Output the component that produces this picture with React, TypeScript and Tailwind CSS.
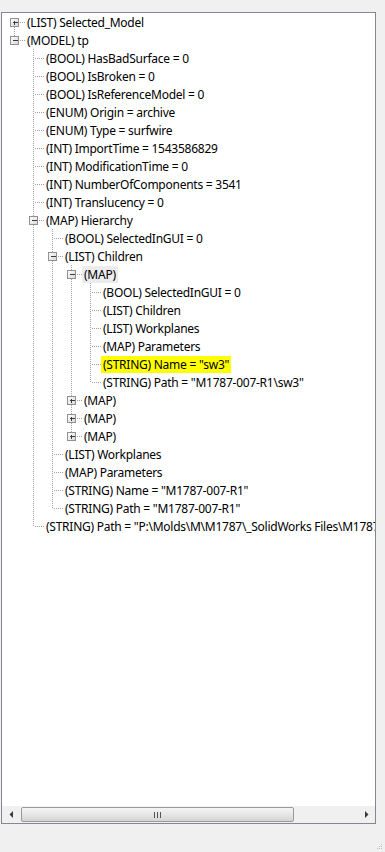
import React from "react";

type TNode = {
  label: string;
  children?: TNode[];
  expanded?: boolean;
  highlight?: boolean;
  gray?: boolean;
};

const leaf = (label: string, extra: Partial<TNode> = {}): TNode => ({ label, ...extra });

const tree: TNode[] = [
  { label: "(LIST) Selected_Model", children: [leaf("x")], expanded: false },
  {
    label: "(MODEL) tp",
    expanded: true,
    children: [
      leaf("(BOOL) HasBadSurface = 0"),
      leaf("(BOOL) IsBroken = 0"),
      leaf("(BOOL) IsReferenceModel = 0"),
      leaf("(ENUM) Origin = archive"),
      leaf("(ENUM) Type = surfwire"),
      leaf("(INT) ImportTime = 1543586829"),
      leaf("(INT) ModificationTime = 0"),
      leaf("(INT) NumberOfComponents = 3541"),
      leaf("(INT) Translucency = 0"),
      {
        label: "(MAP) Hierarchy",
        expanded: true,
        children: [
          leaf("(BOOL) SelectedInGUI = 0"),
          {
            label: "(LIST) Children",
            expanded: true,
            children: [
              {
                label: "(MAP)",
                expanded: true,
                gray: true,
                children: [
                  leaf("(BOOL) SelectedInGUI = 0"),
                  leaf("(LIST) Children"),
                  leaf("(LIST) Workplanes"),
                  leaf("(MAP) Parameters"),
                  leaf('(STRING) Name = "sw3"', { highlight: true }),
                  leaf('(STRING) Path = "M1787-007-R1\\sw3"'),
                ],
              },
              { label: "(MAP)", children: [leaf("x")], expanded: false },
              { label: "(MAP)", children: [leaf("x")], expanded: false },
              { label: "(MAP)", children: [leaf("x")], expanded: false },
            ],
          },
          leaf("(LIST) Workplanes"),
          leaf("(MAP) Parameters"),
          leaf('(STRING) Name = "M1787-007-R1"'),
          leaf('(STRING) Path = "M1787-007-R1"'),
        ],
      },
      leaf('(STRING) Path = "P:\\Molds\\M\\M1787\\_SolidWorks Files\\M1787-007-R1\\M1787-007-R1.SLDASM"'),
    ],
  },
];

type Row = {
  node: TNode;
  level: number;
  isFirstRoot: boolean;
  isLast: boolean;
  continues: boolean[];
};

function flatten(nodes: TNode[], level: number, continues: boolean[], out: Row[]) {
  nodes.forEach((n, i) => {
    const isLast = i === nodes.length - 1;
    out.push({ node: n, level, isFirstRoot: level === 0 && i === 0, isLast, continues });
    if (n.children && n.expanded) {
      flatten(n.children, level + 1, [...continues, !isLast], out);
    }
  });
  return out;
}

const rows = flatten(tree, 0, [], []);

const LINE = "#a0a0a0";

function RowLines({ row }: { row: Row }) {
  const { level, node, isLast, isFirstRoot, continues } = row;
  const w = 23 + 19 * level;
  const cx = 12 + 19 * level + 0.5;
  const has = !!node.children;
  const dash = "1 1";
  return (
    <svg width={w} height={18} className="shrink-0 block" shapeRendering="crispEdges">
      <defs>
        <linearGradient id="bx" x1="0" y1="0" x2="1" y2="1">
          <stop offset="0" stopColor="#ffffff" />
          <stop offset="1" stopColor="#d8d8d8" />
        </linearGradient>
      </defs>
      {continues.map((c, k) =>
        c ? (
          <line key={k} x1={12 + 19 * k + 0.5} y1={0} x2={12 + 19 * k + 0.5} y2={18} stroke={LINE} strokeDasharray={dash} />
        ) : null
      )}
      {!isFirstRoot && (
        <line x1={cx} y1={0} x2={cx} y2={has ? 5 : 9} stroke={LINE} strokeDasharray={dash} />
      )}
      {!isLast && (
        <line x1={cx} y1={has ? 14 : 10} x2={cx} y2={18} stroke={LINE} strokeDasharray={dash} />
      )}
      <line x1={has ? cx + 5.5 : cx + 1.5} y1={9.5} x2={cx + 10.5} y2={9.5} stroke={LINE} strokeDasharray={dash} />
      {has && (
        <g>
          <rect x={cx - 4} y={5.5} width={8} height={8} fill="url(#bx)" stroke="#919191" />
          <line x1={cx - 2} y1={9.5} x2={cx + 3} y2={9.5} stroke="#3a3a3a" />
          {!node.expanded && <line x1={cx} y1={7.5} x2={cx} y2={12} stroke="#3a3a3a" />}
        </g>
      )}
    </svg>
  );
}

function Arrow({ dir }: { dir: "left" | "right" }) {
  return (
    <svg width={4} height={7} className="block">
      {dir === "left" ? (
        <polygon points="4,0 4,7 0.5,3.5" fill="#3a3a3a" />
      ) : (
        <polygon points="0,0 0,7 3.5,3.5" fill="#3a3a3a" />
      )}
    </svg>
  );
}

export default function App() {
  return (
    <div
      className="w-[385px] h-[852px] bg-[#f0f0f0] pt-[12px] pl-[1px] relative overflow-hidden"
      style={{ fontFamily: '"Noto Sans", "Open Sans", sans-serif' }}
    >
      <div className="w-[375px] h-[812px] border border-[#828790] bg-white flex flex-col">
        <div className="flex-1 overflow-hidden">
          {rows.map((r, i) => (
            <div key={i} className="h-[18px] flex items-center whitespace-nowrap">
              <RowLines row={r} />
              <span
                className={
                  "h-[17px] flex items-center px-[2px] text-[12px] tracking-[-0.25px] leading-[17px] text-black " +
                  (r.node.highlight ? "bg-[#ffff00]" : r.node.gray ? "bg-[#ececec]" : "")
                }
              >
                {r.node.label}
              </span>
            </div>
          ))}
        </div>
        <div className="h-[17px] flex bg-[#f0f0f0] shrink-0">
          <div className="w-[17px] flex items-center justify-center">
            <Arrow dir="left" />
          </div>
          <div className="flex-1 flex items-stretch py-[1px]">
            <div className="ml-[2px] w-[273px] rounded-[2px] border border-[#9a9a9a] bg-gradient-to-b from-[#f4f4f4] via-[#e6e6e6] to-[#d4d4d4] flex items-center justify-center">
              <svg width={7} height={6} className="block" shapeRendering="crispEdges">
                <line x1={0.5} y1={0} x2={0.5} y2={6} stroke="#555" />
                <line x1={3.5} y1={0} x2={3.5} y2={6} stroke="#555" />
                <line x1={6.5} y1={0} x2={6.5} y2={6} stroke="#555" />
              </svg>
            </div>
          </div>
          <div className="w-[17px] flex items-center justify-center">
            <Arrow dir="right" />
          </div>
        </div>
      </div>
      <div className="absolute right-[2px] bottom-[2px]">
        <svg width={6} height={6} className="block" shapeRendering="crispEdges">
          <rect x={4} y={0} width={1} height={1} fill="#bdbdbd" />
          <rect x={2} y={2} width={1} height={1} fill="#bdbdbd" />
          <rect x={4} y={2} width={1} height={1} fill="#bdbdbd" />
          <rect x={0} y={4} width={1} height={1} fill="#bdbdbd" />
          <rect x={2} y={4} width={1} height={1} fill="#bdbdbd" />
          <rect x={4} y={4} width={1} height={1} fill="#bdbdbd" />
        </svg>
      </div>
    </div>
  );
}
